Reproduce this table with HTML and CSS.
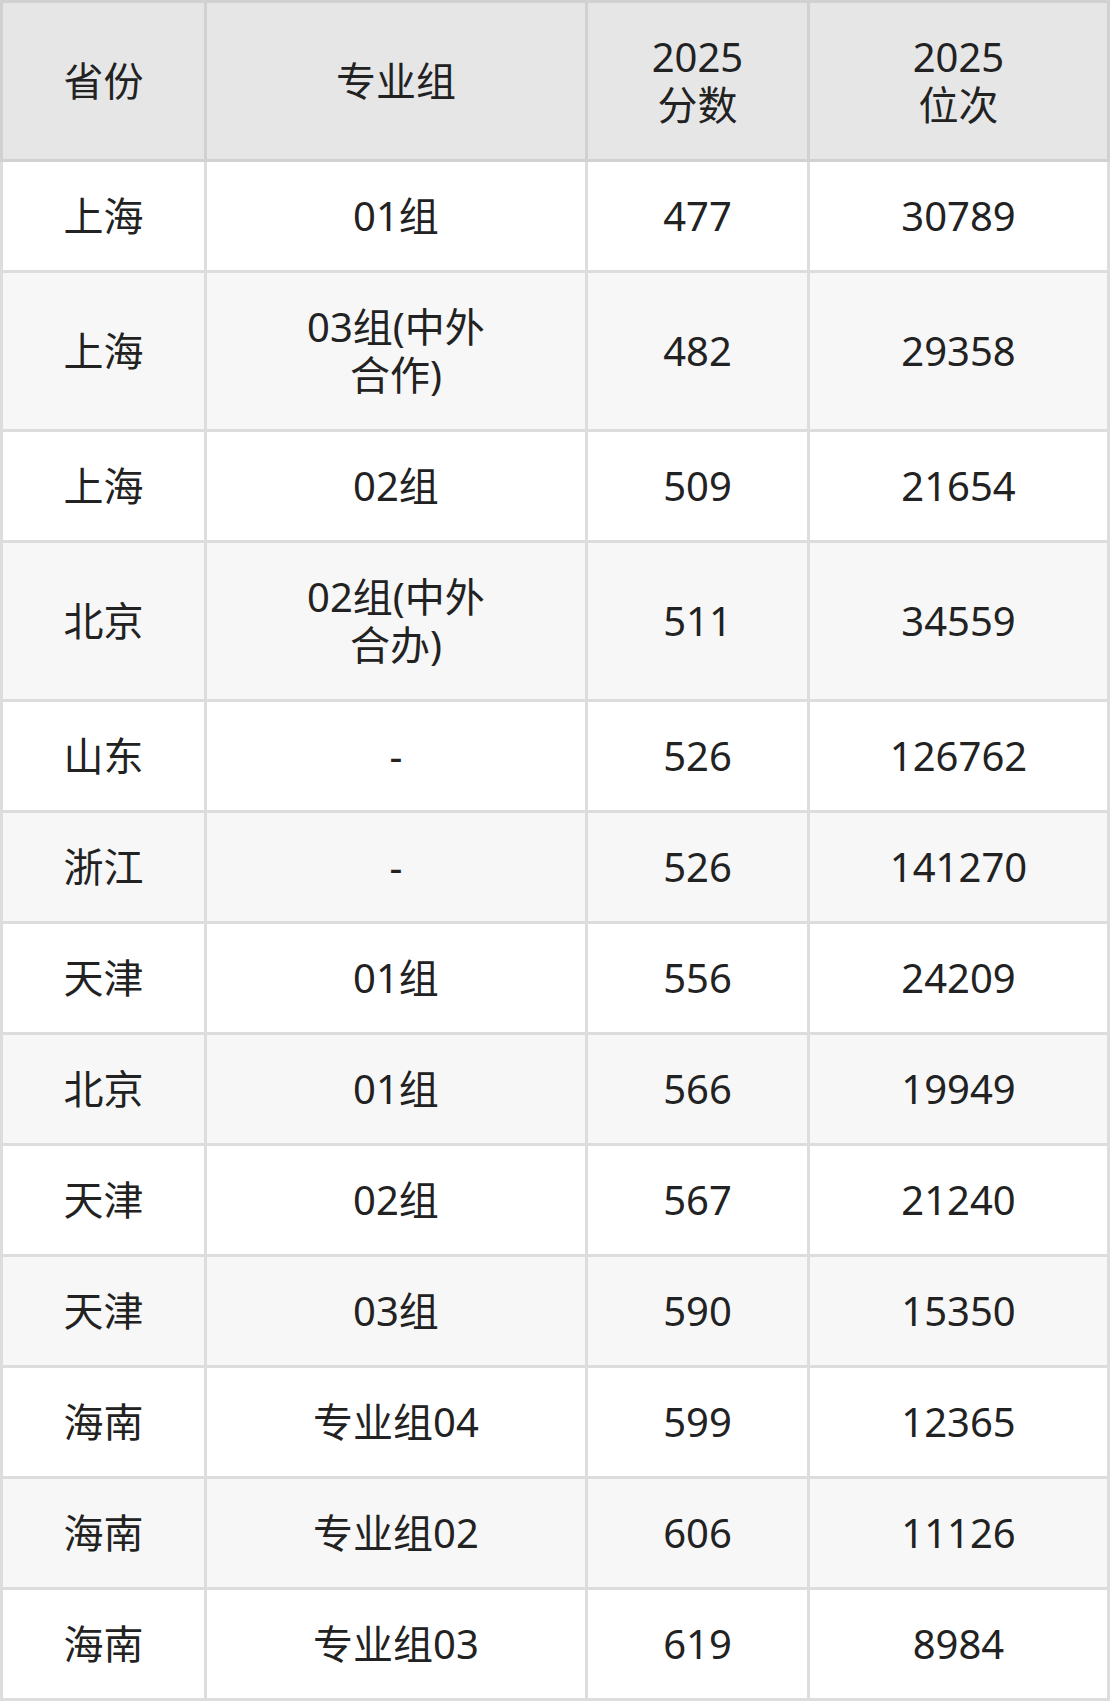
FILE: index.html
```html
<!DOCTYPE html>
<html lang="zh-CN">
<head>
<meta charset="utf-8">
<title>2025 分数位次</title>
<link rel="stylesheet" href="styles.css">
</head>
<body>
<div class="table" role="table">
  <div class="row head" role="row">
    <div class="cell" role="columnheader">省份</div>
    <div class="cell" role="columnheader">专业组</div>
    <div class="cell" role="columnheader"><span class="ln">2025</span><span class="ln">分数</span></div>
    <div class="cell" role="columnheader"><span class="ln">2025</span><span class="ln">位次</span></div>
  </div>
  <div class="row" role="row">
    <div class="cell">上海</div><div class="cell">01组</div><div class="cell">477</div><div class="cell">30789</div>
  </div>
  <div class="row alt" role="row">
    <div class="cell">上海</div><div class="cell"><span class="ln">03组(中外</span><span class="ln">合作)</span></div><div class="cell">482</div><div class="cell">29358</div>
  </div>
  <div class="row" role="row">
    <div class="cell">上海</div><div class="cell">02组</div><div class="cell">509</div><div class="cell">21654</div>
  </div>
  <div class="row alt" role="row">
    <div class="cell">北京</div><div class="cell"><span class="ln">02组(中外</span><span class="ln">合办)</span></div><div class="cell">511</div><div class="cell">34559</div>
  </div>
  <div class="row" role="row">
    <div class="cell">山东</div><div class="cell">-</div><div class="cell">526</div><div class="cell">126762</div>
  </div>
  <div class="row alt" role="row">
    <div class="cell">浙江</div><div class="cell">-</div><div class="cell">526</div><div class="cell">141270</div>
  </div>
  <div class="row" role="row">
    <div class="cell">天津</div><div class="cell">01组</div><div class="cell">556</div><div class="cell">24209</div>
  </div>
  <div class="row alt" role="row">
    <div class="cell">北京</div><div class="cell">01组</div><div class="cell">566</div><div class="cell">19949</div>
  </div>
  <div class="row" role="row">
    <div class="cell">天津</div><div class="cell">02组</div><div class="cell">567</div><div class="cell">21240</div>
  </div>
  <div class="row alt" role="row">
    <div class="cell">天津</div><div class="cell">03组</div><div class="cell">590</div><div class="cell">15350</div>
  </div>
  <div class="row" role="row">
    <div class="cell">海南</div><div class="cell">专业组04</div><div class="cell">599</div><div class="cell">12365</div>
  </div>
  <div class="row alt" role="row">
    <div class="cell">海南</div><div class="cell">专业组02</div><div class="cell">606</div><div class="cell">11126</div>
  </div>
  <div class="row" role="row">
    <div class="cell">海南</div><div class="cell">专业组03</div><div class="cell">619</div><div class="cell">8984</div>
  </div>
</div>
</body>
</html>
```

FILE: styles.css
```css
html, body {
  margin: 0;
  padding: 0;
  background: #ffffff;
}

.table {
  width: 1110px;
  font-family: "Noto Sans", "Noto Sans CJK SC", sans-serif;
  font-size: 40px;
  line-height: 48px;
  color: #222222;
}

.row {
  display: grid;
  grid-template-columns: 207px 381px 222px 300px;
  background: #ffffff;
}

.row.alt {
  background: #f7f7f7;
}

.cell {
  box-sizing: border-box;
  padding: 30px 8px;
  text-align: center;
  display: flex;
  flex-direction: column;
  align-items: center;
  justify-content: center;
  border-right: 3px solid #dddddd;
  border-bottom: 3px solid #dddddd;
}

.ln {
  display: block;
  height: 48px;
  line-height: 48px;
}

.cell:first-child {
  border-left: 3px solid #dddddd;
}

.row.head {
  background: #e6e6e6;
}

.row.head .cell {
  border-color: #d1d1d1;
  border-top: 3px solid #d1d1d1;
}
```
